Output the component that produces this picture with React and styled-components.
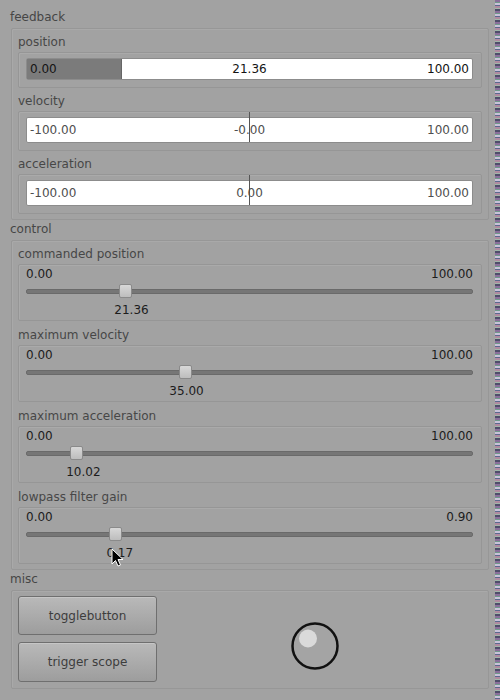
import React from "react";
import styled, { createGlobalStyle } from "styled-components";

const Global = createGlobalStyle`
  html, body { margin: 0; padding: 0; background: #a2a2a2; }
  body { font-family: "DejaVu Sans", "Liberation Sans", sans-serif; font-size: 12px; }
  * { box-sizing: border-box; }
`;

const Page = styled.div`
  position: relative;
  display: flex;
  width: 500px;
  height: 700px;
  overflow: hidden;
  background: #a2a2a2;
`;

const Main = styled.div`
  flex: 1;
  padding-top: 8px;
`;

const Noise = styled.div`
  width: 5px;
  background:
    repeating-linear-gradient(180deg, #8a6f9a 0 2px, #6f9a8a 2px 3px, #c9c2d8 3px 5px, #5b6a8f 5px 6px, #b08aa0 6px 8px, #9fb6a8 8px 9px, #4e4e6a 9px 11px),
    #888;
`;

const SectionTitle = styled.div`
  height: 20px;
  line-height: 18px;
  padding-left: 10px;
  color: #464646;
`;

const Frame = styled.div`
  margin: 0 6px 0 11px;
  border: 1px solid #979797;
  box-shadow: inset 1px 1px 0 #a9a9a9;
  border-radius: 2px;
  padding: 0 6px ${(p) => p.$pb ?? 5}px 6px;
`;

const GroupLabel = styled.div`
  height: 23px;
  padding-top: 3px;
  line-height: 20px;
  color: #474747;
`;

const Box = styled.div`
  border: 1px solid #969696;
  border-radius: 2px;
  box-shadow: inset 1px 1px 0 #aaaaaa;
  padding: ${(p) => (p.$slider ? "2px 8px 3px 7px" : "5px 8px 7px 7px")};
  margin-bottom: ${(p) => (p.$slider ? 1 : 0)}px;
`;

const Bar = styled.div`
  display: grid;
  height: ${(p) => p.$h}px;
  background: #ffffff;
  border: 1px solid #8c8c8c;
  border-radius: 2px;
  & > * { grid-area: 1 / 1; }
`;

const Fill = styled.div`
  justify-self: start;
  height: 100%;
  background: #7b7b7b;
  border-right: 1px solid #666;
`;

const Marker = styled.div`
  justify-self: center;
  width: 1px;
  margin-top: -6px;
  background: #555555;
`;

const BarText = styled.div`
  display: grid;
  grid-template-columns: 1fr auto 1fr;
  align-items: center;
  padding: 0 3px 0 3px;
  color: ${(p) => (p.$dark ? "#141414" : "#4e4e4e")};
  & > span:last-child { text-align: right; }
`;

const MinMax = styled.div`
  display: flex;
  justify-content: space-between;
  line-height: 14px;
  height: 14px;
  color: #1c1c1c;
`;

const TrackArea = styled.div`
  position: relative;
  height: 20px;
  display: flex;
  align-items: center;
`;

const Trough = styled.div`
  flex: 1;
  height: 5px;
  background: #767676;
  border: 1px solid #6a6a6a;
  border-radius: 2px;
`;

const Handle = styled.div`
  position: absolute;
  top: 3px;
  width: 13px;
  height: 14px;
  margin-left: -6px;
  background: linear-gradient(#d8d8d8, #bdbdbd);
  border: 1px solid #8a8a8a;
  border-radius: 2px;
`;

const ValueRow = styled.div`
  position: relative;
  height: 14px;
  line-height: 14px;
  margin-top: 2px;
  color: #1c1c1c;
`;

const Value = styled.span`
  position: absolute;
  top: 0;
  transform: translateX(-50%);
  white-space: nowrap;
`;

const MiscBox = styled.div`
  display: flex;
  padding: 5px 10px 1px 0;
`;

const ButtonCol = styled.div`
  display: flex;
  flex-direction: column;
  gap: 7px;
  width: 139px;
`;

const Button = styled.button`
  height: ${(p) => p.$h}px;
  font: inherit;
  font-size: 12px;
  color: #3d3d3d;
  background: linear-gradient(#b9b9b9, #9d9d9d);
  border: 1px solid #6f6f6f;
  border-radius: 3px;
  box-shadow: inset 0 1px 0 #c6c6c6;
  padding: 0;
`;

const LampArea = styled.div`
  flex: 1;
  display: flex;
  justify-content: center;
  align-items: center;
  padding-top: 13px;
`;

const Cursor = styled.svg`
  position: absolute;
  left: 111px;
  top: 548px;
`;

const TRACK_W = 447;

function Progress({ label, min, max, value, frac, h, dark, marker }) {
  return (
    <>
      <GroupLabel>{label}</GroupLabel>
      <Box>
        <Bar $h={h}>
          {frac != null && <Fill style={{ width: `${frac * 100}%` }} />}
          {marker && <Marker />}
          <BarText $dark={dark}>
            <span>{min}</span>
            <span>{value}</span>
            <span>{max}</span>
          </BarText>
        </Bar>
      </Box>
    </>
  );
}

function Slider({ label, min, max, value, frac, off = 4 }) {
  const center = 7 + frac * (TRACK_W - 14);
  return (
    <>
      <GroupLabel>{label}</GroupLabel>
      <Box $slider>
        <MinMax>
          <span>{min}</span>
          <span>{max}</span>
        </MinMax>
        <TrackArea>
          <Trough />
          <Handle style={{ left: `${center}px` }} />
        </TrackArea>
        <ValueRow>
          <Value style={{ left: `${center + off}px` }}>{value}</Value>
        </ValueRow>
      </Box>
    </>
  );
}

export default function App() {
  return (
    <Page>
      <Global />
      <Main>
        <SectionTitle>feedback</SectionTitle>
        <Frame>
          <Progress label="position" min="0.00" value="21.36" max="100.00" frac={0.2136} h={22} dark />
          <Progress label="velocity" min="-100.00" value="-0.00" max="100.00" h={26} marker />
          <Progress label="acceleration" min="-100.00" value="0.00" max="100.00" h={26} marker />
        </Frame>
        <SectionTitle>control</SectionTitle>
        <Frame $pb={4}>
          <Slider label="commanded position" min="0.00" max="100.00" value="21.36" frac={0.2136} off={6} />
          <Slider label="maximum velocity" min="0.00" max="100.00" value="35.00" frac={0.35} off={2} />
          <Slider label="maximum acceleration" min="0.00" max="100.00" value="10.02" frac={0.1002} off={7} />
          <Slider label="lowpass filter gain" min="0.00" max="0.90" value="0.17" frac={0.17 / 0.9} off={5} />
        </Frame>
        <SectionTitle>misc</SectionTitle>
        <Frame>
          <MiscBox>
            <ButtonCol>
              <Button $h={39}>togglebutton</Button>
              <Button $h={40}>trigger scope</Button>
            </ButtonCol>
            <LampArea>
              <svg width="50" height="50" viewBox="0 0 50 50">
                <circle cx="25" cy="25" r="22.5" fill="#a4a4a4" stroke="#111" strokeWidth="2.5" />
                <circle cx="18" cy="17.5" r="9" fill="#dadada" />
              </svg>
            </LampArea>
          </MiscBox>
        </Frame>
      </Main>
      <Noise />
      <Cursor width="13" height="20" viewBox="0 0 13 20">
        <path d="M1 1 L1 16 L4.5 12.5 L7 18 L9.5 17 L7 11.5 L12 11.5 Z" fill="#000" stroke="#fff" strokeWidth="1" />
      </Cursor>
    </Page>
  );
}
